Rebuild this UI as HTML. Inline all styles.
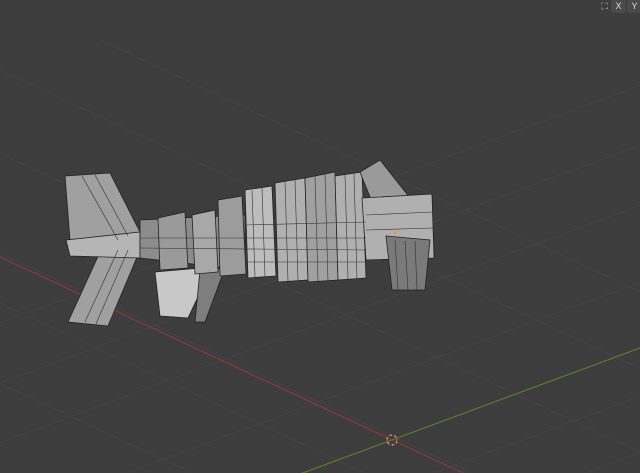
<!DOCTYPE html>
<html><head><style>
html,body{margin:0;padding:0;width:640px;height:473px;overflow:hidden;background:#3d3d3d;font-family:"Liberation Sans",sans-serif;position:relative}
svg{display:block;position:absolute;left:0;top:0}
.ax{position:absolute;top:0;width:15px;height:13px;background:#4a4a4a;color:#ddd;font-size:9px;line-height:13px;text-align:center;border-radius:2px}
</style></head><body>
<svg width="640" height="473" viewBox="0 0 640 473">
<g stroke="#444" stroke-width="1">
<line x1="-200" y1="160" x2="600" y2="533"/>
<line x1="-200" y1="60" x2="700" y2="480"/>
<line x1="0" y1="70" x2="800" y2="443"/>
<line x1="100" y1="40" x2="900" y2="413"/>
<line x1="-200" y1="210" x2="500" y2="536"/>
<line x1="-200" y1="290" x2="400" y2="570"/>
<line x1="0" y1="520" x2="700" y2="260"/>
<line x1="-100" y1="480" x2="700" y2="183"/>
<line x1="-100" y1="420" x2="700" y2="123"/>
<line x1="-100" y1="360" x2="700" y2="63"/>
<line x1="200" y1="560" x2="700" y2="374"/>
<line x1="300" y1="580" x2="700" y2="430"/>
</g>
<line x1="0" y1="257" x2="463" y2="473" stroke="#8a3a3a" stroke-width="1.2"/>
<line x1="300" y1="474" x2="640" y2="348" stroke="#5f7a2e" stroke-width="1.2"/>
<circle cx="392" cy="440" r="5" fill="none" stroke="#e8e8e8" stroke-dasharray="3 2" stroke-width="1.3"/>
<circle cx="392" cy="440" r="5" fill="none" stroke="#c33" stroke-dasharray="2 3" stroke-width="1.3"/>
<g stroke="#222" stroke-width="0.8" fill="#a0a0a0">
<polygon points="65,176 110,173 140,232 105,246 70,240"/>
<polygon points="100,252 140,250 108,326 68,322"/>
<polygon points="66,240 140,232 140,258 70,256" fill="#b5b5b5"/>
<polygon points="140,220 245,215 245,270 140,258" fill="#8c8c8c"/>
<polygon points="155,272 212,267 188,318 160,316" fill="#c8c8c8"/>
<polygon points="200,270 225,268 205,322 195,322" fill="#7e7e7e"/>
<polygon points="158,218 185,212 188,268 160,270" fill="#9a9a9a"/>
<polygon points="192,215 215,210 218,272 195,274" fill="#a8a8a8"/>
<polygon points="218,200 242,196 246,274 220,276" fill="#9c9c9c"/>
<polygon points="245,190 272,186 276,276 248,278" fill="#bdbdbd"/>
<polygon points="275,183 305,178 308,280 278,282" fill="#b0b0b0"/>
<polygon points="305,178 335,172 338,280 308,282" fill="#a0a0a0"/>
<polygon points="335,176 362,172 366,278 338,280" fill="#b0b0b0"/>
<polygon points="360,172 380,160 410,198 372,202" fill="#9a9a9a"/>
<polygon points="362,198 432,194 434,258 366,260" fill="#b0b0b0"/>
<polygon points="386,236 430,240 425,290 392,290" fill="#7a7a7a"/>
</g>
<g stroke="#333" stroke-width="0.6">
<line x1="82" y1="176" x2="118" y2="240"/><line x1="95" y1="175" x2="128" y2="236"/>
<line x1="118" y1="250" x2="85" y2="322"/><line x1="128" y1="250" x2="96" y2="324"/>
<line x1="252" y1="190" x2="255" y2="277"/><line x1="262" y1="188" x2="265" y2="277"/>
<line x1="285" y1="181" x2="288" y2="281"/><line x1="295" y1="180" x2="298" y2="281"/>
<line x1="315" y1="176" x2="318" y2="281"/><line x1="325" y1="174" x2="328" y2="281"/>
<line x1="345" y1="175" x2="348" y2="279"/><line x1="354" y1="174" x2="357" y2="279"/>
<line x1="140" y1="238" x2="366" y2="238"/><line x1="140" y1="248" x2="366" y2="250"/>
<line x1="245" y1="225" x2="366" y2="222"/><line x1="245" y1="262" x2="366" y2="262"/>
<line x1="395" y1="240" x2="398" y2="290"/><line x1="405" y1="241" x2="408" y2="290"/><line x1="415" y1="241" x2="417" y2="290"/>
<line x1="366" y1="215" x2="433" y2="212"/><line x1="366" y1="230" x2="433" y2="228"/>
</g>
<circle cx="395" cy="233" r="1.5" fill="#f90"/>
</svg>
<div class="ax" style="left:597px;background:#3d3d3d">⛶</div>
<div class="ax" style="left:611px">X</div>
<div class="ax" style="left:627px">Y</div>
</body></html>
